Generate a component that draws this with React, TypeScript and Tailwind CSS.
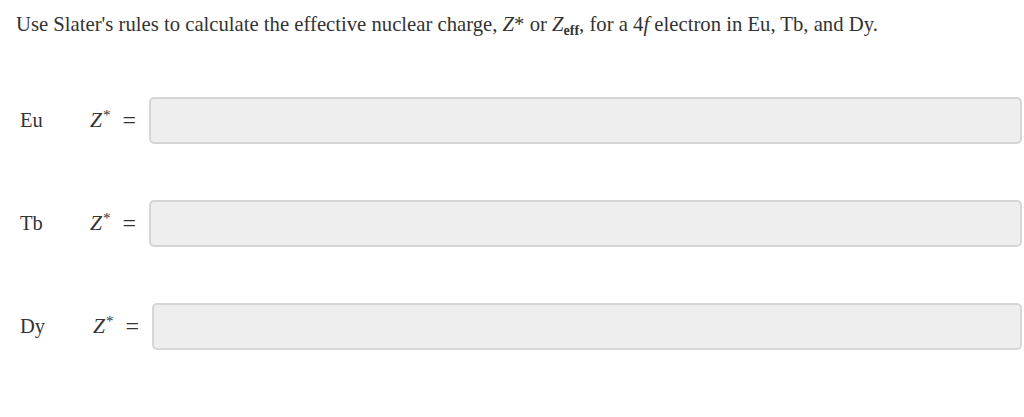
import React from "react";

function Row({ el, zLeft }: { el: string; zLeft: string }) {
  return (
    <div className="flex items-center h-[46px] text-[20.5px] text-[#333]">
      <div className={`${zLeft} shrink-0 pl-[20px]`}>{el}</div>
      <div className="flex items-center w-[59px] shrink-0">
        <span className="italic text-[21.5px]">Z</span>
        <span className="text-[15px] -mt-[9px] ml-[1px]">*</span>
        <span className="ml-[12px] text-[24px] leading-none">=</span>
      </div>
      <div className="h-[47px] flex-1 mr-[2px] rounded-[5px] border-2 border-[#d6d6d6] bg-[#eeeeee]" />
    </div>
  );
}

export default function App() {
  return (
    <div className="w-[1024px] h-[417px] bg-white font-['Liberation_Serif',serif] overflow-hidden">
      <div className="pt-[10px] pl-[16px] text-[20.7px] text-[#333] leading-[28px] whitespace-nowrap">
        Use Slater's rules to calculate the effective nuclear charge, <i>Z</i>* or <i>Z</i>
        <sub className="text-[14px] font-bold">eff</sub>, for a 4<i>f</i> electron in Eu, Tb, and Dy.
      </div>
      <div className="mt-[59px] flex flex-col gap-[57px]">
        <Row el="Eu" zLeft="w-[90px]" />
        <Row el="Tb" zLeft="w-[90px]" />
        <Row el="Dy" zLeft="w-[93px]" />
      </div>
    </div>
  );
}
